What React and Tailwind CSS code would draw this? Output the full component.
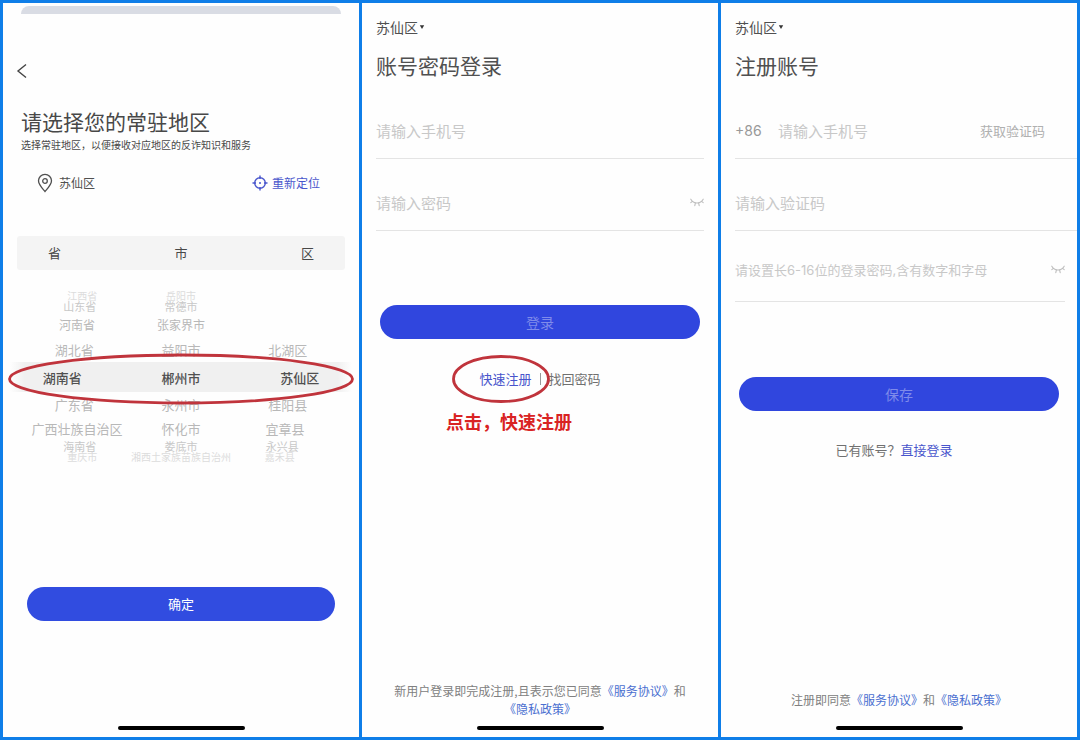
import React, { useState } from 'react';

// Rows of the region wheel, from top to bottom: [province, city, district]
const WHEEL_ROWS = [
    { cells: ['江西省', '岳阳市', ''], row: 'h-[10px] px-[30px] text-[10px] text-[#dcdcdc]' },
    { cells: ['山东省', '常德市', ''], row: 'h-[11px] px-[26px] text-[11px] text-[#c8c8c8]' },
    { cells: ['河南省', '张家界市', ''], row: 'h-4 mt-[5px] px-[22px] text-[12px] text-[#b8b8b8]' },
    { cells: ['湖北省', '益阳市', '北湖区'], row: 'h-4 mt-2 px-[18px] text-[13px] text-[#b8b8b8]' },
    { cells: ['湖南省', '郴州市', '苏仙区'], active: true },
    { cells: ['广东省', '永州市', '桂阳县'], row: 'h-4 mt-1 px-[18px] text-[13px] text-[#b8b8b8]' },
    { cells: ['广西壮族自治区', '怀化市', '宜章县'], row: 'h-4 mt-2 px-[22px] text-[13px] text-[#b8b8b8]' },
    { cells: ['海南省', '娄底市', '永兴县'], row: 'h-[11px] mt-[5px] px-[26px] text-[11px] text-[#c8c8c8]' },
    { cells: ['重庆市', '湘西土家族苗族自治州', '嘉禾县'], row: 'h-[10px] px-[30px] text-[10px] text-[#dcdcdc]' },
];

function Phone({ children }) {
    return (
        <section className="flex min-w-0 flex-col bg-[#fefefe] pb-[7px]">
            <div className="flex flex-1 flex-col">{children}</div>
            {/* Home indicator */}
            <div className="mx-auto h-1 w-[127px] rounded-full bg-black" />
        </section>
    );
}

function ClosedEye() {
    return (
        <svg viewBox="0 0 14 9" className="h-[9px] w-[14px]" fill="none" stroke="#bdbdbd" strokeWidth="1.1" strokeLinecap="round">
            <path d="M0.8 1.2C3.5 6.2 10.5 6.2 13.2 1.2M2.4 3.4L0.8 4.6M5.4 4.9L4.8 7.6M8.6 4.9L9.2 7.6M11.6 3.4L13.2 4.6" />
        </svg>
    );
}

function RegionSwitch() {
    return (
        <button type="button" className="mt-[14px] flex h-5 items-center gap-px self-start text-[14px] leading-5 text-[#505050]">
            苏仙区
            <svg viewBox="0 0 6 6" className="h-[6px] w-[6px]" fill="#333">
                <path d="M0.8 1.2H5.2L3 5z" />
            </svg>
        </button>
    );
}

function SelectRegion() {
    return (
        <Phone>
            <div className="mx-[18px] mt-[3px] h-2 rounded-t-lg bg-[#d9dce4]" />
            <button type="button" aria-label="返回" className="mt-[49px] ml-[13px] h-4 w-3 self-start">
                <svg viewBox="0 0 12 16" className="h-4 w-3" fill="none" stroke="#444" strokeWidth="1.4">
                    <path d="M10 1.5L2 8l8 6.5" />
                </svg>
            </button>

            <h1 className="mt-[26px] ml-[18px] text-[21px] leading-8 text-[#484848]">请选择您的常驻地区</h1>
            <p className="ml-[18px] text-[10px] leading-4 text-[#484848]">选择常驻地区，以便接收对应地区的反诈知识和服务</p>

            <div className="mt-5 flex h-5 items-center justify-between pr-[39px] pl-[34px]">
                <div className="flex items-center gap-[6px] text-[12px] text-[#505050]">
                    <svg viewBox="0 0 16 20" className="h-5 w-4" fill="none" stroke="#505050" strokeWidth="1.3">
                        <path d="M8 18.500C5 15 1.500 11.600 1.500 7.800a6.500 6.500 0 0 1 13 0C14.500 11.600 11 15 8 18.500z" />
                        <circle cx="8" cy="8" r="2.3" />
                    </svg>
                    苏仙区
                </div>
                <button type="button" className="flex items-center gap-1 text-[12px] text-[#4855cc]">
                    <svg viewBox="0 0 16 16" className="h-4 w-4" fill="none" stroke="#4855cc" strokeWidth="1.4">
                        <circle cx="8" cy="8" r="5.3" />
                        <path d="M8 0.5V4M8 12v3.500M0.500 8H4M12 8h3.500" />
                        <circle cx="8" cy="8" r="1" fill="#4855cc" stroke="none" />
                    </svg>
                    重新定位
                </button>
            </div>

            <div className="mx-[14px] mt-[43px] flex h-[34px] items-center justify-between rounded-[3px] bg-[#f4f4f4] px-[31px] text-[13px] text-[#484848]">
                <span>省</span>
                <span>市</span>
                <span>区</span>
            </div>

            {/* Region wheel: rows get smaller and paler away from the selected one */}
            <div className="mt-[21px] flex flex-col">
                {WHEEL_ROWS.map(({ cells, row, active }) => (
                    <div
                        key={cells[0]}
                        className={
                            active
                                ? 'relative mt-[5px] grid h-[30px] grid-cols-3 items-center bg-[linear-gradient(to_right,#fefefe_2%,#f0f0f0_6%,#f0f0f0_94%,#fefefe_98%)] text-[13px] font-medium text-[#505050]'
                                : `grid grid-cols-3 items-center ${row}`
                        }
                    >
                        {cells.map((name, i) => (
                            <span key={i} className="flex justify-center leading-none whitespace-nowrap">
                                {name}
                            </span>
                        ))}
                        {active && (
                            <svg viewBox="0 0 346 52" className="absolute top-[-9px] left-[5px] h-[52px] w-[346px]" fill="none" stroke="#c0343c" strokeWidth="2.8">
                                <ellipse cx="173" cy="26" rx="171.5" ry="24" />
                            </svg>
                        )}
                    </div>
                ))}
            </div>

            <button type="button" className="mx-6 mt-[125px] h-[34px] rounded-full bg-[#314ce0] text-[13px] text-white">
                确定
            </button>
        </Phone>
    );
}

function Login() {
    return (
        <Phone>
            <div className="flex flex-col px-[14px]">
                <RegionSwitch />
                <h1 className="mt-3 text-[21px] leading-8 text-[#505050]">账号密码登录</h1>
                <div className="mt-6 flex h-[54px] items-center border-b border-[#e4e4e4] pb-[2px]">
                    <input type="tel" aria-label="手机号" placeholder="请输入手机号" className="h-8 min-w-0 flex-1 text-[15px] outline-none placeholder:text-[#c8c8c8]" />
                </div>
                <div className="mt-[18px] flex h-[54px] items-center border-b border-[#e4e4e4] pb-[2px]">
                    <input type="password" aria-label="密码" placeholder="请输入密码" className="h-8 min-w-0 flex-1 text-[15px] outline-none placeholder:text-[#c8c8c8]" />
                    <button type="button" aria-label="显示密码"><ClosedEye /></button>
                </div>
            </div>

            <button type="button" className="mx-[18px] mt-[74px] h-[34px] rounded-full bg-[#3046de] text-[14px] text-[#7f8bea]">
                登录
            </button>

            <div className="mt-[30px] flex h-5 items-center justify-center gap-2 text-[13px] text-[#707070]">
                <span className="relative">
                    <a href="#register" className="text-[#4855cc]">快速注册</a>
                    <svg viewBox="0 0 98 48" className="absolute top-[-14px] left-[-27px] h-12 w-[98px]" fill="none" stroke="#c0343c" strokeWidth="2.8">
                        <ellipse cx="49" cy="24" rx="47.5" ry="22.5" />
                    </svg>
                </span>
                <span className="h-3 w-px bg-[#999]" />
                <a href="#forgot">找回密码</a>
            </div>
            <p className="mt-5 ml-[84px] text-[18px] leading-6 font-bold text-[#d92323]">点击，快速注册</p>

            <p className="mt-auto mb-2 px-6 text-center text-[12px] leading-[18px] text-[#808080]">
                新用户登录即完成注册,且表示您已同意
                <a href="#service" className="text-[#4a6fd0]">《服务协议》</a>和
                <br />
                <a href="#privacy" className="text-[#4a6fd0]">《隐私政策》</a>
            </p>
        </Phone>
    );
}

function Register() {
    const [phone, setPhone] = useState('');

    return (
        <Phone>
            <div className="flex flex-col pl-[14px]">
                <RegionSwitch />
                <h1 className="mt-3 text-[21px] leading-8 text-[#505050]">注册账号</h1>
                <div className="mt-6 flex h-[54px] items-center border-b border-[#e4e4e4] pr-8 pb-[2px]">
                    <span className="w-[43px] font-[Inter] text-[14px] text-[#999]">+86</span>
                    <input
                        type="tel"
                        aria-label="手机号"
                        placeholder="请输入手机号"
                        value={phone}
                        onChange={(e) => setPhone(e.target.value)}
                        className="h-8 min-w-0 flex-1 text-[15px] outline-none placeholder:text-[#c8c8c8]"
                    />
                    <button type="button" className="text-[13px] text-[#b0b0b0]">获取验证码</button>
                </div>
                <div className="mt-[18px] flex h-[54px] items-center border-b border-[#e4e4e4] pb-[2px]">
                    <input type="text" aria-label="验证码" placeholder="请输入验证码" className="h-8 min-w-0 flex-1 text-[15px] outline-none placeholder:text-[#c8c8c8]" />
                </div>
                <div className="mt-[9px] mr-3 flex h-[62px] items-center border-b border-[#e4e4e4] pb-[2px]">
                    <input type="password" aria-label="登录密码" placeholder="请设置长6-16位的登录密码,含有数字和字母" className="h-8 min-w-0 flex-1 font-[Inter,'Noto_Sans_CJK_SC',sans-serif] text-[13px] outline-none placeholder:text-[#c8c8c8]" />
                    <button type="button" aria-label="显示密码"><ClosedEye /></button>
                </div>
            </div>

            <button type="button" className="mx-[18px] mt-[75px] h-[34px] rounded-full bg-[#3046de] text-[14px] text-[#7f8bea]">
                保存
            </button>

            <p className="mt-[29px] pr-[10px] text-center text-[13px] leading-5 text-[#707070]">
                已有账号？<a href="#login" className="text-[#4855cc]">直接登录</a>
            </p>

            <p className="mt-auto mb-[17px] text-center text-[12px] leading-[18px] text-[#808080]">
                注册即同意<a href="#service" className="text-[#4a6fd0]">《服务协议》</a>和
                <a href="#privacy" className="text-[#4a6fd0]">《隐私政策》</a>
            </p>
        </Phone>
    );
}

function App() {
    return (
        <main className="grid min-h-screen grid-cols-3 gap-[3px] bg-[#0f7ee8] p-[3px] font-['Noto_Sans_CJK_SC',sans-serif]">
            <SelectRegion />
            <Login />
            <Register />
        </main>
    );
}

export default App;
